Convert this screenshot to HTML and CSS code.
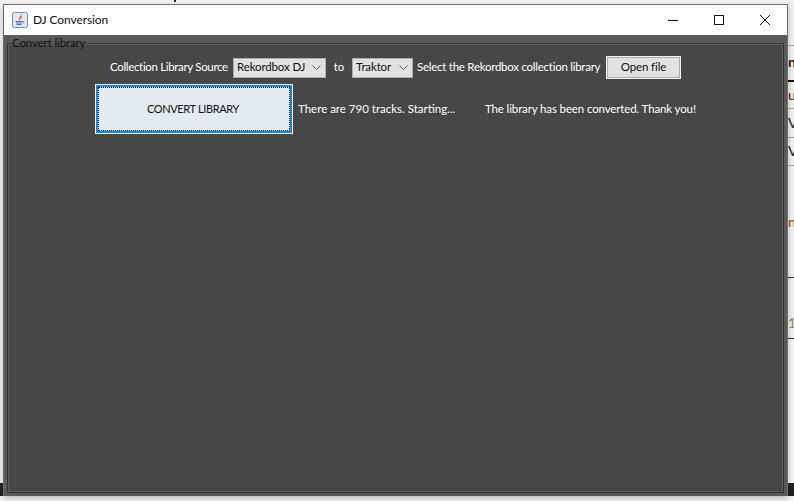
FILE: index.html
```html
<!DOCTYPE html>
<html lang="en">
  <head>
  <meta charset="utf-8">
  <title>DJ Conversion</title>
  <link rel="stylesheet" href="styles.css">
  </head>
  <body>
    <!-- bits of the window behind -->
    <div class="behind">
      <div class="behind-line l45"></div>
      <div class="behind-line l80"></div>
      <div class="behind-line l108"></div>
      <div class="behind-line l137"></div>
      <div class="behind-line l165"></div>
      <div class="behind-line l277"></div>
      <div class="behind-line l338"></div>
      <span class="behind-text t57">n</span>
      <span class="behind-text t90">u</span>
      <span class="behind-text t118">V</span>
      <span class="behind-text t146">V</span>
      <span class="behind-text t217">n</span>
      <span class="behind-text t318">1</span>
    </div>
    <div class="behind-top"></div>
    <div class="taskbar left"></div>
    <div class="taskbar right"></div>

    <div class="window">
      <div class="titlebar">
        <svg class="app-icon" width="16" height="16" viewBox="0 0 16 16">
          <rect x="0.5" y="0.5" width="15" height="15" rx="2" fill="#dfe9f5" stroke="#6d8fb5"/>
          <path d="M8.5 1.5 C10 4 6 5 7 7.5 C7.3 8.2 8 8.8 8 8.8 C7.5 7 11 6 9.5 3.5 Z" fill="#e2702a"/>
          <path d="M3.5 9.5 H10.5 M4 11 H10 M4.5 12.5 H9.5" stroke="#4a74a5" stroke-width="1" fill="none"/>
          <path d="M10.5 9.5 C12.5 9 12.5 11 10.5 11.2" stroke="#4a74a5" stroke-width="0.8" fill="none"/>
        </svg>
        <span class="title">DJ Conversion</span>
        <div class="controls">
          <svg width="46" height="30" viewBox="0 0 46 30"><path d="M19 15.5 H29" stroke="#111" fill="none"/></svg>
          <svg width="46" height="30" viewBox="0 0 46 30"><rect x="19.5" y="10.5" width="9" height="9" stroke="#111" fill="none"/></svg>
          <svg width="46" height="30" viewBox="0 0 46 30"><path d="M19 10 L29 20 M29 10 L19 20" stroke="#111" fill="none"/></svg>
        </div>
      </div>
      <div class="content">
        <fieldset class="group">
          <legend>Convert library</legend>
          <div class="row-source">
            <span class="label label-source">Collection Library Source</span>
            <div class="combo combo-source">
              <span>Rekordbox DJ</span>
              <svg width="9" height="5" viewBox="0 0 9 5"><path d="M0.5 0.5 L4.5 4.5 L8.5 0.5" stroke="#666" fill="none"/></svg>
            </div>
            <span class="label label-to">to</span>
            <div class="combo combo-target">
              <span>Traktor</span>
              <svg width="9" height="5" viewBox="0 0 9 5"><path d="M0.5 0.5 L4.5 4.5 L8.5 0.5" stroke="#666" fill="none"/></svg>
            </div>
            <span class="label label-select">Select the Rekordbox collection library</span>
            <button class="open-btn" type="button">Open file</button>
          </div>
          <div class="row-convert">
            <button class="convert-btn" type="button"><span>CONVERT LIBRARY</span></button>
            <span class="label status-tracks">There are 790 tracks. Starting...</span>
            <span class="label">The library has been converted. Thank you!</span>
          </div>
        </fieldset>
      </div>
    </div>
  </body>
</html>
```

FILE: styles.css
```css
* {
  margin: 0;
  padding: 0;
  box-sizing: border-box;
}

html, body {
  width: 794px;
  height: 501px;
  overflow: hidden;
}

body {
  background: #f4f4f4;
  font-family: Lato, "Noto Sans", sans-serif;
  font-size: 11.5px;
  letter-spacing: -0.13px;
  color: #111;
  position: relative;
}

.behind {
  position: absolute;
  left: 788px;
  top: 0;
  width: 6px;
  height: 340px;
  overflow: hidden;
  background: #f0f0f0;
}

.behind-line {
  position: absolute;
  left: 0;
  width: 6px;
  height: 1px;
  background: #a8a8a8;
}

.l45 { top: 45px; }
.l80 { top: 80px; height: 2px; background: #111; }
.l108 { top: 108px; }
.l137 { top: 137px; }
.l165 { top: 165px; }
.l277 { top: 277px; background: #333; }
.l338 { top: 338px; background: #333; }

.behind-text {
  position: absolute;
  left: 0;
  font-size: 14px;
  line-height: 18px;
  color: #222;
}

.t57 { top: 53px; font-weight: bold; }
.t90 { top: 86px; }
.t118 { top: 114px; }
.t146 { top: 142px; }
.t217 { top: 213px; color: #a5520f; }
.t318 { top: 314px; color: #8a8760; }

.behind-top {
  position: absolute;
  left: 174px;
  top: 0;
  width: 2px;
  height: 2px;
  background: #222;
}

.taskbar {
  position: absolute;
  top: 483px;
  height: 13px;
  background: #222;
}

.taskbar.left { left: 0; width: 4px; }
.taskbar.right { left: 788px; width: 6px; }

.window {
  position: absolute;
  left: 3px;
  top: 4px;
  width: 785px;
  height: 492px;
  display: flex;
  flex-direction: column;
  background: #fff;
  border: 1px solid #6f6f6f;
  border-bottom: none;
  box-shadow: 0 2px 6px rgba(0,0,0,0.25);
}

.titlebar {
  height: 30px;
  flex: none;
  display: flex;
  align-items: center;
  padding-left: 8px;
  background: #fff;
}

.title {
  margin-left: 5px;
  padding-bottom: 2px;
  font-size: 12px;
  letter-spacing: -0.1px;
  color: #111;
}

.controls {
  margin-left: auto;
  display: flex;
}

.controls svg {
  display: block;
}

.content {
  flex: 1;
  background: #5a5a5a;
  padding: 2px 3px 3px 3px;
  display: flex;
}

.group {
  flex: 1;
  min-width: 0;
  background: #474747;
  border: 1px solid #333;
  border-top-color: #3a3a3a;
  padding: 0;
  box-shadow: inset 0 0 0 1px #5e5e5e;
}

.group legend {
  margin-left: 3px;
  padding: 0 1px;
  line-height: 12px;
  color: #111;
}

.label {
  color: #fff;
  white-space: nowrap;
  padding-bottom: 2px;
}

.row-source {
  display: flex;
  align-items: center;
  height: 23px;
  margin-top: 7px;
  margin-left: 102px;
}

.label-source {
  width: 118px;
  letter-spacing: -0.33px;
}

.combo {
  height: 20px;
  display: flex;
  align-items: center;
  justify-content: space-between;
  padding: 0 4px 0 3px;
  background: #e1e1e1;
  border: 1px solid #adadad;
  color: #111;
  white-space: nowrap;
}

.combo span {
  padding-bottom: 2px;
}

.combo-source {
  width: 93px;
  margin-left: 5px;
}

.combo-target {
  width: 61px;
}

.label-to {
  width: 26px;
  text-align: center;
}

.label-select {
  width: 184px;
  margin-left: 4px;
  letter-spacing: -0.26px;
}

.open-btn {
  width: 75px;
  height: 23px;
  margin-left: 5px;
  padding-bottom: 2px;
  background: #e1e1e1;
  border: 1px solid #f2f2f2;
  box-shadow: inset 0 0 0 1px #adadad;
  font: inherit;
  letter-spacing: inherit;
  color: #111;
}

.row-convert {
  display: flex;
  align-items: center;
  margin-top: 5px;
  margin-left: 87px;
}

.convert-btn {
  flex: none;
  width: 198px;
  height: 50px;
  background: #e3eaf2;
  border: 1px solid #eef2f7;
  box-shadow: inset 0 0 0 2px #1b85d8;
  padding: 2px;
  font: inherit;
  font-size: 11px;
  letter-spacing: -0.35px;
  color: #111;
  display: flex;
  outline: none;
}

.convert-btn span {
  flex: 1;
  display: flex;
  align-items: center;
  justify-content: center;
  padding: 0 2px 2px 0;
  border: 1px dotted #111;
}

.row-convert .label {
  margin-left: 5px;
}

.row-convert .status-tracks {
  width: 182px;
  letter-spacing: 0;
}
```
